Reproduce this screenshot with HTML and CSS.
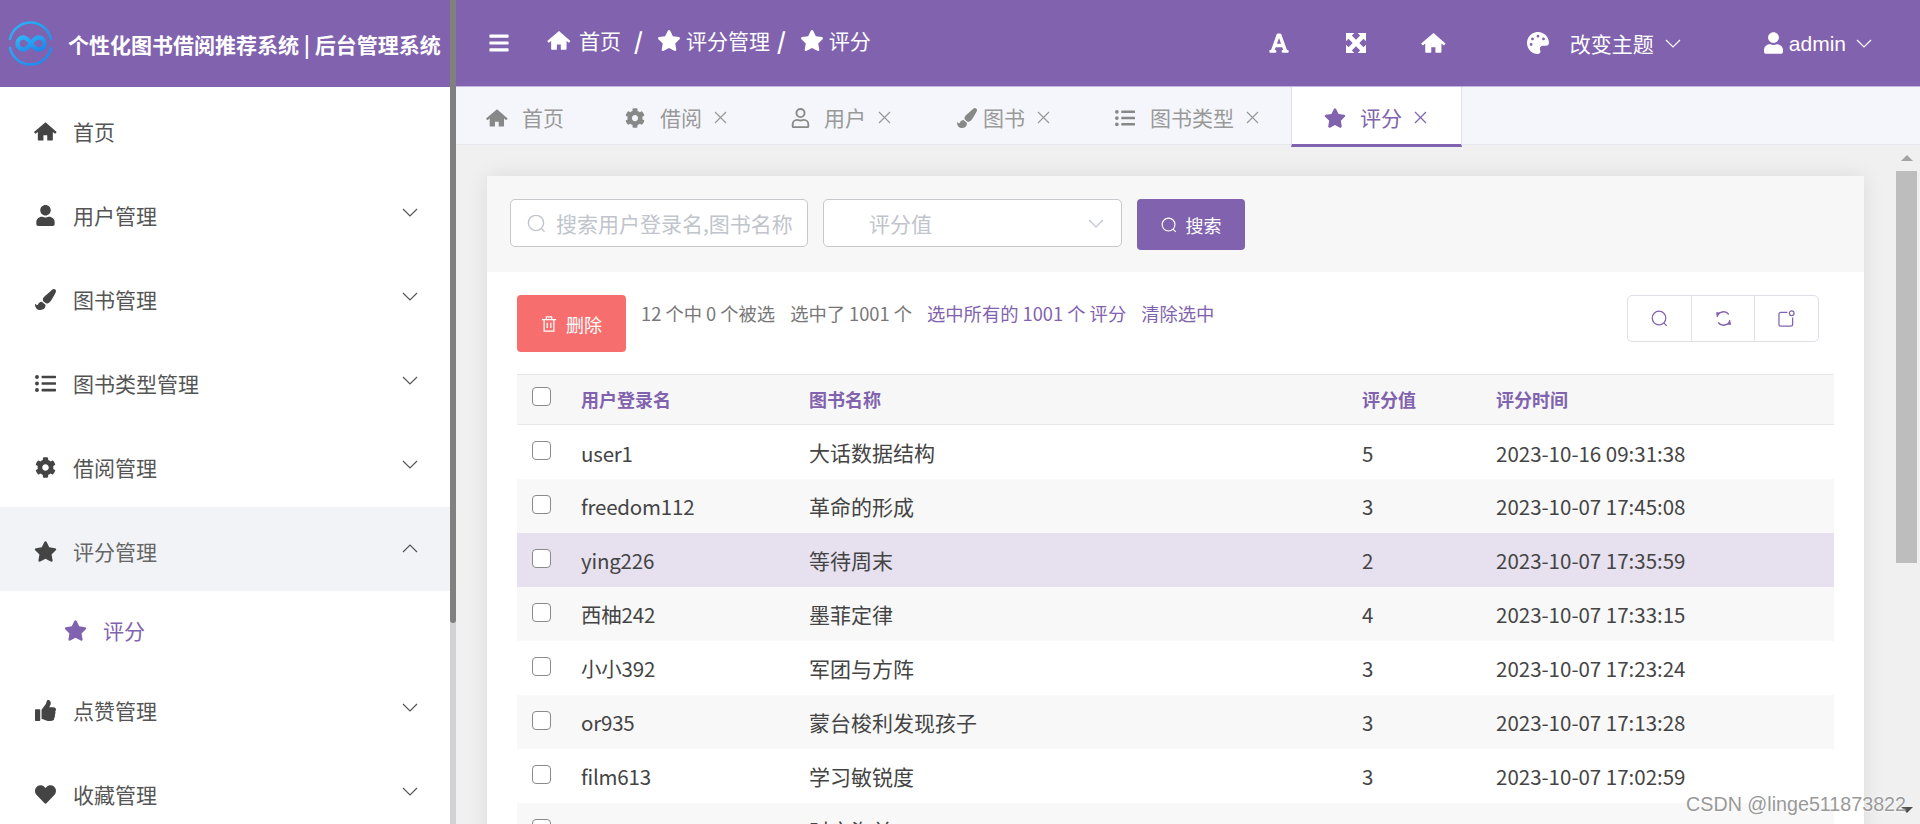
FILE: index.html
```html
<!DOCTYPE html>
<html lang="zh-CN">
<head>
    <meta charset="UTF-8">
    <meta name="viewport" content="width=device-width, initial-scale=1.0">
    <title>个性化图书借阅推荐系统</title>
    <link rel="stylesheet" href="styles.css">
</head>
<body>
    <!-- Icon sprite -->
    <svg class="sprite" xmlns="http://www.w3.org/2000/svg">
        <symbol id="i-star" viewBox="0 0 576 512"><path d="M259.3 17.8L194 150.2 47.9 171.5c-26.2 3.8-36.7 36.1-17.7 54.6l105.7 103-25 145.5c-4.5 26.3 23.2 46 46.4 33.7L288 439.6l130.7 68.7c23.2 12.2 50.9-7.4 46.4-33.7l-25-145.5 105.7-103c19-18.5 8.5-50.8-17.7-54.6L382 150.2 316.7 17.8c-11.7-23.6-45.6-23.9-57.4 0z"/></symbol>
        <symbol id="i-home" viewBox="0 0 576 512"><path d="M288 24L8 262a12 12 0 0 0-1 17l24 27a12 12 0 0 0 16 1l49-41v199a16 16 0 0 0 16 16h116a8 8 0 0 0 8-8V352h96v121a8 8 0 0 0 8 8h116a16 16 0 0 0 16-16V266l49 41a12 12 0 0 0 16-1l24-27a12 12 0 0 0-1-17z"/></symbol>
        <symbol id="i-user" viewBox="0 0 448 512"><path d="M224 256c70.7 0 128-57.3 128-128S294.7 0 224 0 96 57.3 96 128s57.3 128 128 128zm89.6 32h-16.7c-22.2 10.2-46.9 16-72.9 16s-50.6-5.8-72.9-16h-16.7C60.2 288 0 348.2 0 422.4V464c0 26.5 21.5 48 48 48h352c26.5 0 48-21.5 48-48v-41.6c0-74.2-60.2-134.4-134.4-134.4z"/></symbol>
        <symbol id="i-user-o" viewBox="0 0 448 512"><path fill="none" stroke="currentColor" stroke-width="48" d="M224 232a104 104 0 1 0 0-208 104 104 0 0 0 0 208zM48 488a24 24 0 0 1-24-24v-48c0-62 50-112 112-112 30 0 44 16 88 16s58-16 88-16c62 0 112 50 112 112v48a24 24 0 0 1-24 24z"/></symbol>
        <symbol id="i-cog" viewBox="0 0 512 512"><path d="M487.4 315.7l-42.6-24.6c4.3-23.2 4.3-47 0-70.2l42.6-24.6c4.9-2.8 7.1-8.6 5.5-14-11.1-35.6-30-67.8-54.7-94.6-3.8-4.1-10-5.1-14.8-2.3L380.8 110c-17.9-15.4-38.5-27.3-60.8-35.1V25.8c0-5.6-3.9-10.5-9.4-11.7-36.7-8.2-74.3-7.8-109.2 0-5.5 1.2-9.4 6.1-9.4 11.7V75c-22.2 7.9-42.8 19.8-60.8 35.1L88.7 85.5c-4.9-2.8-11-1.9-14.8 2.3-24.7 26.7-43.6 58.9-54.7 94.6-1.7 5.4.6 11.2 5.5 14L67.3 221c-4.3 23.2-4.3 47 0 70.2l-42.6 24.6c-4.9 2.8-7.1 8.6-5.5 14 11.1 35.6 30 67.8 54.7 94.6 3.8 4.1 10 5.1 14.8 2.3l42.6-24.6c17.9 15.4 38.5 27.3 60.8 35.1v49.2c0 5.6 3.9 10.5 9.4 11.7 36.7 8.2 74.3 7.8 109.2 0 5.5-1.2 9.4-6.1 9.4-11.7v-49.2c22.2-7.9 42.8-19.8 60.8-35.1l42.6 24.6c4.9 2.8 11 1.9 14.8-2.3 24.7-26.7 43.6-58.9 54.7-94.6 1.5-5.5-.7-11.3-5.6-14.1zM256 336c-44.1 0-80-35.9-80-80s35.9-80 80-80 80 35.9 80 80-35.9 80-80 80z"/></symbol>
        <symbol id="i-brush" viewBox="0 0 512 512"><path d="M167.02 309.34c-40.12 2.58-76.53 17.86-97.19 72.3-2.35 6.21-8 9.98-14.59 9.98-11.11 0-45.46-27.67-55.25-34.35C0 439.62 37.93 512 128 512c75.86 0 128-43.77 128-120.19 0-3.11-.65-6.08-.97-9.13l-88.01-73.34zM457.89 0c-15.16 0-29.37 6.71-40.21 16.45C213.27 199.05 192 203.34 192 257.09c0 13.7 3.25 26.76 8.73 38.7l63.82 53.18c7.21 1.8 14.64 3.03 22.39 3.03 62.11 0 98.11-45.47 211.16-256.46 7.38-14.35 13.9-29.85 13.9-45.99C512 20.64 486 0 457.89 0z"/></symbol>
        <symbol id="i-list" viewBox="0 0 512 512"><path d="M48 48a48 48 0 1 0 48 48 48 48 0 0 0-48-48zm0 160a48 48 0 1 0 48 48 48 48 0 0 0-48-48zm0 160a48 48 0 1 0 48 48 48 48 0 0 0-48-48zm448 16H176a16 16 0 0 0-16 16v32a16 16 0 0 0 16 16h320a16 16 0 0 0 16-16v-32a16 16 0 0 0-16-16zm0-320H176a16 16 0 0 0-16 16v32a16 16 0 0 0 16 16h320a16 16 0 0 0 16-16V80a16 16 0 0 0-16-16zm0 160H176a16 16 0 0 0-16 16v32a16 16 0 0 0 16 16h320a16 16 0 0 0 16-16v-32a16 16 0 0 0-16-16z"/></symbol>
        <symbol id="i-thumb" viewBox="0 0 512 512"><path d="M104 224H24c-13.255 0-24 10.745-24 24v240c0 13.255 10.745 24 24 24h80c13.255 0 24-10.745 24-24V248c0-13.255-10.745-24-24-24zM384 81.452c0 42.416-25.97 66.208-33.277 94.548h101.723c33.397 0 59.397 27.746 59.553 58.098.084 17.938-7.546 37.249-19.439 49.197l-.11.11c9.836 23.337 8.237 56.037-9.308 79.469 8.681 25.895-.069 57.704-16.382 74.757 4.298 17.598 2.244 32.575-6.148 44.632C440.202 511.587 389.616 512 346.839 512l-2.845-.001c-48.287-.017-87.806-17.598-119.56-31.725-15.957-7.099-36.821-15.887-52.651-16.178-6.54-.12-11.783-5.457-11.783-11.998v-213.77c0-3.2 1.282-6.271 3.558-8.521 39.614-39.144 56.648-80.587 89.117-113.111 14.804-14.832 20.188-37.236 25.393-58.902C282.515 39.293 291.817 0 312 0c24 0 72 8 72 81.452z"/></symbol>
        <symbol id="i-heart" viewBox="0 0 512 512"><path d="M462.3 62.6C407.5 15.9 326 24.3 275.7 76.2L256 96.5l-19.7-20.3C186.1 24.3 104.5 15.9 49.7 62.6c-62.8 53.6-66.1 149.8-9.9 207.9l193.5 199.8c12.5 12.9 32.8 12.9 45.3 0l193.5-199.8c56.3-58.1 53-154.3-9.8-207.9z"/></symbol>
        <symbol id="i-palette" viewBox="0 0 512 512"><path d="M204.3 5C104.9 24.4 24.8 104.3 5.2 203.4c-37 187 131.7 326.4 258.8 306.7 41.2-6.4 61.4-54.6 42.5-91.7-23.1-45.4 9.9-98.4 60.9-98.4h79.7c35.8 0 64.8-29.6 64.9-65.3C511.5 97.1 368.1-26.9 204.3 5zM96 320c-17.7 0-32-14.3-32-32s14.3-32 32-32 32 14.3 32 32-14.3 32-32 32zm32-128c-17.7 0-32-14.3-32-32s14.3-32 32-32 32 14.3 32 32-14.3 32-32 32zm128-64c-17.7 0-32-14.3-32-32s14.3-32 32-32 32 14.3 32 32-14.3 32-32 32zm128 64c-17.7 0-32-14.3-32-32s14.3-32 32-32 32 14.3 32 32-14.3 32-32 32z"/></symbol>
        <symbol id="i-font" viewBox="0 0 448 512"><path d="M432 416h-23.41L277.88 53.69A32 32 0 0 0 247.58 32h-47.16a32 32 0 0 0-30.3 21.69L39.41 416H16a16 16 0 0 0-16 16v32a16 16 0 0 0 16 16h128a16 16 0 0 0 16-16v-32a16 16 0 0 0-16-16h-19.58l23.3-64h152.56l23.3 64H304a16 16 0 0 0-16 16v32a16 16 0 0 0 16 16h128a16 16 0 0 0 16-16v-32a16 16 0 0 0-16-16zM176.85 272L224 142.51 271.15 272z"/></symbol>
        <symbol id="i-expand" viewBox="0 0 24 24"><path d="M0 0h10L7 3l5 5 5-5-3-3h10v10l-3-3-5 5 5 5 3-3v10H14l3-3-5-5-5 5 3 3H0V14l3 3 5-5-5-5-3 3z"/></symbol>
        <symbol id="i-bars" viewBox="0 0 448 512"><path d="M16 132h416c8.837 0 16-7.163 16-16V76c0-8.837-7.163-16-16-16H16C7.163 60 0 67.163 0 76v40c0 8.837 7.163 16 16 16zm0 160h416c8.837 0 16-7.163 16-16v-40c0-8.837-7.163-16-16-16H16c-8.837 0-16 7.163-16 16v40c0 8.837 7.163 16 16 16zm0 160h416c8.837 0 16-7.163 16-16v-40c0-8.837-7.163-16-16-16H16c-8.837 0-16 7.163-16 16v40c0 8.837 7.163 16 16 16z"/></symbol>
        <!-- line icons -->
        <symbol id="i-down" viewBox="0 0 16 9"><path fill="none" stroke="currentColor" stroke-width="1.2" d="M1 1l7 7 7-7"/></symbol>
        <symbol id="i-up" viewBox="0 0 16 9"><path fill="none" stroke="currentColor" stroke-width="1.2" d="M1 8l7-7 7 7"/></symbol>
        <symbol id="i-close" viewBox="0 0 13 13"><path fill="none" stroke="currentColor" stroke-width="1.2" d="M1 1l11 11M12 1L1 12"/></symbol>
        <symbol id="i-search" viewBox="0 0 18 18"><circle cx="8.5" cy="8.5" r="7.2" fill="none" stroke="currentColor" stroke-width="1.3"/><path fill="none" stroke="currentColor" stroke-width="1.3" d="M13.6 13.6l3 3.2"/></symbol>
        <symbol id="i-refresh" viewBox="0 0 16 16"><path fill="none" stroke="currentColor" stroke-width="1.3" d="M2 6.5A6.2 6.2 0 0 1 13 4.2M14 9.500A6.200 6.200 0 0 1 3 11.800"/><path d="M1 2l4 .4-3.600 3zM15 14l-4-.4 3.600-3z"/></symbol>
        <symbol id="i-notice" viewBox="0 0 18 18"><path fill="none" stroke="currentColor" stroke-width="1.300" d="M10 2.500H3a2 2 0 0 0-2 2V15a2 2 0 0 0 2 2h10.500a2 2 0 0 0 2-2V8"/><circle cx="14.500" cy="3.500" r="2.500" fill="none" stroke="currentColor" stroke-width="1.300"/></symbol>
        <symbol id="i-trash" viewBox="0 0 16 18"><path fill="none" stroke="currentColor" stroke-width="1.400" d="M0 4h16M5 4V1h6v3M2.500 4v13h11V4M6 7.500v6M10 7.500v6"/></symbol>
    </svg>

    <!-- Sidebar -->
    <aside class="side">
        <div class="brand">
            <svg class="brand-logo" viewBox="0 0 45 45">
                <defs>
                    <linearGradient id="logo-grad" x1="0" y1="0" x2="1" y2="1">
                        <stop offset="0" stop-color="#2fb4f8"/>
                        <stop offset="1" stop-color="#1a86ee"/>
                    </linearGradient>
                </defs>
                <path fill="none" stroke="url(#logo-grad)" stroke-width="2.400" d="M1.800 19A21 21 0 0 1 43.200 19M43.200 26A21 21 0 0 1 1.800 26"/>
                <path fill="none" stroke="url(#logo-grad)" stroke-width="4.400" d="M23 22.500c-2.500-3.500-4.500-6-7.500-6a6 6 0 0 0 0 12c3 0 5-2.500 7.500-6s4.500-6 7.500-6a6 6 0 0 1 0 12c-3 0-5-2.500-7.500-6z"/>
            </svg>
            <span>个性化图书借阅推荐系统 | 后台管理系统</span>
        </div>
        <nav class="menu">
            <a class="menu-item"><svg class="ico"><use href="#i-home"/></svg>首页</a>
            <a class="menu-item"><svg class="ico"><use href="#i-user"/></svg>用户管理<svg class="chev"><use href="#i-down"/></svg></a>
            <a class="menu-item"><svg class="ico"><use href="#i-brush"/></svg>图书管理<svg class="chev"><use href="#i-down"/></svg></a>
            <a class="menu-item"><svg class="ico"><use href="#i-list"/></svg>图书类型管理<svg class="chev"><use href="#i-down"/></svg></a>
            <a class="menu-item"><svg class="ico"><use href="#i-cog"/></svg>借阅管理<svg class="chev"><use href="#i-down"/></svg></a>
            <a class="menu-item open"><svg class="ico"><use href="#i-star"/></svg>评分管理<svg class="chev"><use href="#i-up"/></svg></a>
            <a class="menu-sub"><svg class="ico"><use href="#i-star"/></svg>评分</a>
            <a class="menu-item"><svg class="ico"><use href="#i-thumb"/></svg>点赞管理<svg class="chev"><use href="#i-down"/></svg></a>
            <a class="menu-item"><svg class="ico"><use href="#i-heart"/></svg>收藏管理<svg class="chev"><use href="#i-down"/></svg></a>
        </nav>
    </aside>
    <div class="side-track"><div class="side-thumb"></div></div>

    <div class="right">
        <!-- Top bar -->
        <header class="topbar">
            <svg class="ico-bars"><use href="#i-bars"/></svg>
            <div class="crumbs">
                <svg class="ico-crumb crumb-first"><use href="#i-home"/></svg><span class="crumb-home">首页</span>
                <b class="crumb-sep">/</b>
                <svg class="ico-crumb"><use href="#i-star"/></svg><span>评分管理</span>
                <b class="crumb-sep">/</b>
                <svg class="ico-crumb"><use href="#i-star"/></svg><span>评分</span>
            </div>
            <div class="tools">
                <span class="tool"><svg class="ico-tool"><use href="#i-font"/></svg></span>
                <span class="tool"><svg class="ico-tool"><use href="#i-expand"/></svg></span>
                <span class="tool"><svg class="ico-tool"><use href="#i-home"/></svg></span>
            </div>
            <div class="theme">
                <svg class="ico-tool"><use href="#i-palette"/></svg>
                <span>改变主题</span>
                <svg class="chev-top"><use href="#i-down"/></svg>
            </div>
            <div class="account">
                <svg class="ico-tool"><use href="#i-user"/></svg>
                <span>admin</span>
                <svg class="chev-top"><use href="#i-down"/></svg>
            </div>
        </header>

        <!-- Tabs -->
        <div class="tabs">
            <div class="tab tab-first"><svg class="ico"><use href="#i-home"/></svg>首页</div>
            <div class="tab"><svg class="ico"><use href="#i-cog"/></svg>借阅<svg class="tab-x"><use href="#i-close"/></svg></div>
            <div class="tab tab-user"><svg class="ico"><use href="#i-user-o"/></svg>用户<svg class="tab-x"><use href="#i-close"/></svg></div>
            <div class="tab tab-brush"><svg class="ico"><use href="#i-brush"/></svg>图书<svg class="tab-x"><use href="#i-close"/></svg></div>
            <div class="tab"><svg class="ico"><use href="#i-list"/></svg>图书类型<svg class="tab-x"><use href="#i-close"/></svg></div>
            <div class="tab active"><svg class="ico"><use href="#i-star"/></svg>评分<svg class="tab-x"><use href="#i-close"/></svg></div>
        </div>

        <div class="main">
            <div class="content">
                <section class="card">
                    <!-- Search form -->
                    <div class="search">
                        <label class="field field-text">
                            <svg class="ico-search"><use href="#i-search"/></svg>
                            <input type="text" placeholder="搜索用户登录名,图书名称">
                        </label>
                        <div class="field field-select">
                            <span>评分值</span>
                            <svg class="chev-select"><use href="#i-down"/></svg>
                        </div>
                        <button class="btn-search"><svg class="ico-btn"><use href="#i-search"/></svg>搜索</button>
                    </div>

                    <div class="panel">
                        <!-- Table toolbar -->
                        <div class="toolbar">
                            <button class="btn-del"><svg class="ico-btn"><use href="#i-trash"/></svg>删除</button>
                            <div class="selected">
                                <span>12 个中 0 个被选</span>
                                <span>选中了 1001 个</span>
                                <a>选中所有的 1001 个 评分</a>
                                <a>清除选中</a>
                            </div>
                            <div class="actions">
                                <span class="action"><svg><use href="#i-search"/></svg></span>
                                <span class="action"><svg><use href="#i-refresh"/></svg></span>
                                <span class="action"><svg><use href="#i-notice"/></svg></span>
                            </div>
                        </div>

                        <table class="grid">
                            <colgroup>
                                <col class="col-check">
                                <col class="col-user">
                                <col class="col-book">
                                <col class="col-score">
                                <col>
                            </colgroup>
                            <thead>
                                <tr>
                                    <th><input class="check" type="checkbox"></th>
                                    <th>用户登录名</th>
                                    <th>图书名称</th>
                                    <th>评分值</th>
                                    <th>评分时间</th>
                                </tr>
                            </thead>
                            <tbody>
                                <tr>
                                    <td><input class="check" type="checkbox"></td>
                                    <td class="cell-user">user1</td>
                                    <td class="cell-book">大话数据结构</td>
                                    <td>5</td>
                                    <td>2023-10-16 09:31:38</td>
                                </tr>
                                <tr>
                                    <td><input class="check" type="checkbox"></td>
                                    <td class="cell-user">freedom112</td>
                                    <td class="cell-book">革命的形成</td>
                                    <td>3</td>
                                    <td>2023-10-07 17:45:08</td>
                                </tr>
                                <tr class="hover">
                                    <td><input class="check" type="checkbox"></td>
                                    <td class="cell-user">ying226</td>
                                    <td class="cell-book">等待周末</td>
                                    <td>2</td>
                                    <td>2023-10-07 17:35:59</td>
                                </tr>
                                <tr>
                                    <td><input class="check" type="checkbox"></td>
                                    <td class="cell-user">西柚242</td>
                                    <td class="cell-book">墨菲定律</td>
                                    <td>4</td>
                                    <td>2023-10-07 17:33:15</td>
                                </tr>
                                <tr>
                                    <td><input class="check" type="checkbox"></td>
                                    <td class="cell-user">小小392</td>
                                    <td class="cell-book">军团与方阵</td>
                                    <td>3</td>
                                    <td>2023-10-07 17:23:24</td>
                                </tr>
                                <tr>
                                    <td><input class="check" type="checkbox"></td>
                                    <td class="cell-user">or935</td>
                                    <td class="cell-book">蒙台梭利发现孩子</td>
                                    <td>3</td>
                                    <td>2023-10-07 17:13:28</td>
                                </tr>
                                <tr>
                                    <td><input class="check" type="checkbox"></td>
                                    <td class="cell-user">film613</td>
                                    <td class="cell-book">学习敏锐度</td>
                                    <td>3</td>
                                    <td>2023-10-07 17:02:59</td>
                                </tr>
                                <tr>
                                    <td><input class="check" type="checkbox"></td>
                                    <td class="cell-user">star827</td>
                                    <td class="cell-book">时空海关</td>
                                    <td>4</td>
                                    <td>2023-10-07 16:52:41</td>
                                </tr>
                            </tbody>
                        </table>
                    </div>
                </section>
            </div>
            <div class="main-track">
                <i class="arrow-up"></i>
                <div class="main-thumb"></div>
                <i class="arrow-down"></i>
            </div>
        </div>
    </div>

    <div class="watermark">CSDN @linge511873822</div>
</body>
</html>
```

FILE: styles.css
```css
* {
    box-sizing: border-box;
}
body {
    margin: 0;
    height: 100vh;
    display: flex;
    overflow: hidden;
    font-family: "Noto Sans CJK SC", "Noto Sans", sans-serif;
    color: #444;
    background: #fff;
}
.sprite {
    display: none;
}
svg {
    fill: currentColor;
    flex: none;
}

/* Sidebar */
.side {
    width: 450px;
    flex: none;
    height: 100%;
    overflow: hidden;
}
.brand {
    height: 87px;
    background: #8162ae;
    color: #fff;
    display: flex;
    align-items: center;
    padding-left: 8px;
    gap: 15px;
    font-size: 21px;
    font-weight: 700;
    white-space: nowrap;
}
.brand-logo {
    width: 45px;
    height: 45px;
}
.menu-item,
.menu-sub {
    display: flex;
    align-items: center;
    font-size: 21px;
    line-height: 1;
    padding-top: 4px;
    color: #555;
}
.menu-item {
    height: 84px;
    padding-left: 34px;
}
.menu-item .ico,
.menu-sub .ico {
    width: 23px;
    height: 21px;
    margin-right: 16px;
    color: #444;
}
.menu-item.open {
    background: #f1f3f7;
    color: #666;
}
.chev {
    width: 16px;
    height: 9px;
    margin: 0 32px 6px auto;
    color: #555;
}
.menu-sub {
    height: 75px;
    padding-left: 64px;
    color: #8162ae;
}
.menu-sub .ico {
    color: #8162ae;
}
.side-track {
    width: 6px;
    flex: none;
    background: #d1d1d6;
}
.side-thumb {
    height: 623px;
    background: #808080;
    border-radius: 0 0 3px 3px;
}

.right {
    flex: 1;
    min-width: 0;
    display: flex;
    flex-direction: column;
}

/* Top bar */
.topbar {
    height: 87px;
    flex: none;
    display: flex;
    align-items: center;
    background: #8162ae;
    border-bottom: 1px solid #c3b6de;
    color: #fff;
    font-size: 21px;
    line-height: 1;
    padding: 0 48px 0 33px;
}
.ico-bars {
    width: 20px;
    height: 22px;
}
.crumbs {
    display: flex;
    align-items: center;
    margin-left: 38px;
    padding-bottom: 5px;
}
.ico-crumb {
    width: 24px;
    height: 21px;
    margin-right: 5px;
}
.crumb-first {
    margin-right: 8px;
}
.crumb-home {
    margin-right: 6px;
}
.crumb-sep {
    font-size: 23px;
    margin: 0 14px 0 7px;
}
.tools {
    display: flex;
    margin-left: auto;
}
.tool {
    width: 77px;
    display: flex;
    justify-content: center;
}
.ico-tool {
    height: 22px;
    width: 22px;
}
.tool:nth-child(3) .ico-tool {
    width: 25px;
}
.tool:nth-child(2) .ico-tool {
    height: 20px;
    width: 20px;
    margin-top: 1px;
}
.theme {
    display: flex;
    align-items: center;
    margin-left: 55px;
}
.theme span {
    margin: 0 11px 0 21px;
}
.chev-top {
    width: 16px;
    height: 9px;
}
.account {
    display: flex;
    align-items: center;
    margin-left: 83px;
}
.account .ico-tool {
    width: 19px;
}
.account span {
    font-family: "Liberation Sans", sans-serif;
    margin: 0 10px 0 6px;
}

/* Tabs */
.tabs {
    height: 58px;
    flex: none;
    display: flex;
    align-items: flex-start;
    background: #f4f6fb;
    border-bottom: 1px solid #e4e6ec;
    position: relative;
    z-index: 1;
}
.tab {
    height: 57px;
    display: flex;
    align-items: center;
    padding: 4px 32px 0;
    font-size: 21px;
    line-height: 1;
    color: #999;
}
.tab .ico {
    width: 22px;
    height: 20px;
    margin-right: 14px;
    color: #888;
}
.tab-first {
    padding: 4px 28px 0 30px;
}
.tab-user {
    padding-right: 33px;
}
.tab-user .ico {
    width: 19px;
}
.tab-brush .ico {
    width: 24px;
    margin-left: -1px;
    margin-right: 4px;
}
.tab-x {
    width: 13px;
    height: 13px;
    margin-left: 12px;
    color: #999;
}
.tab.active {
    height: 60px;
    padding: 4px 34px 0 32px;
    background: #fff;
    color: #8162ae;
    border-left: 1px solid #dfe1ea;
    border-right: 1px solid #dfe1ea;
    border-bottom: 3px solid #8162ae;
}
.tab.active .ico,
.tab.active .tab-x {
    color: #8162ae;
}

/* Main area */
.main {
    flex: 1;
    min-height: 0;
    display: flex;
    background: #f0f0f0;
}
.content {
    flex: 1;
    min-width: 0;
    padding: 31px 32px 0 31px;
    overflow: hidden;
}
.card {
    background: #fff;
    box-shadow: 0 0 20px rgba(0, 0, 0, .09);
}
.main-track {
    width: 24px;
    flex: none;
    display: flex;
    flex-direction: column;
    align-items: center;
    padding: 10px 3px 11px 0;
}
.arrow-up {
    border: 6px solid transparent;
    border-top: 0;
    border-bottom: 6px solid #a3a3a3;
    margin-bottom: 10px;
}
.main-thumb {
    width: 21px;
    height: 392px;
    background: #bdbdbd;
}
.arrow-down {
    margin-top: auto;
    border: 6px solid transparent;
    border-bottom: 0;
    border-top: 6px solid #505050;
}

/* Search form */
.search {
    height: 96px;
    background: #f7f7f7;
    display: flex;
    align-items: flex-start;
    gap: 15px;
    padding: 23px 0 0 23px;
}
.field {
    height: 48px;
    background: #fff;
    border: 1px solid #c8c8cc;
    border-radius: 5px;
    display: flex;
    align-items: center;
    font-size: 21px;
    color: #c0c4cc;
}
.field-text {
    width: 298px;
    padding-left: 16px;
}
.ico-search {
    width: 19px;
    height: 19px;
    margin-right: 10px;
}
.field-text input {
    width: 245px;
    border: 0;
    outline: 0;
    padding: 0;
    background: none;
    font: inherit;
}
.field-text input::placeholder {
    color: #c0c4cc;
}
.field-select {
    width: 299px;
    padding-left: 45px;
}
.chev-select {
    width: 16px;
    height: 9px;
    margin-left: auto;
    margin-right: 17px;
}
.btn-search,
.btn-del {
    border: 0;
    border-radius: 4px;
    color: #fff;
    font: inherit;
    font-size: 18px;
    line-height: 1;
    display: flex;
    align-items: center;
    justify-content: center;
    width: 108px;
    padding: 0;
}
.btn-search {
    height: 51px;
    background: #8162ae;
}
.ico-btn {
    width: 16px;
    height: 16px;
    margin-right: 9px;
}

/* Table toolbar */
.panel {
    padding: 23px 30px 0;
}
.toolbar {
    height: 79px;
    display: flex;
    align-items: flex-start;
    font-size: 18.3px;
    color: #777;
}
.btn-del {
    height: 57px;
    width: 109px;
    background: #f76e6e;
}
.selected {
    display: flex;
    gap: 15px;
    margin-left: 15px;
    line-height: 36px;
}
.selected a {
    color: #8162ae;
}
.actions {
    display: flex;
    margin: 0 15px 0 auto;
    width: 192px;
    height: 47px;
    border: 1px solid #e0dee9;
    border-radius: 5px;
    color: #8162ae;
}
.action {
    flex: 1;
    display: flex;
    align-items: center;
    justify-content: center;
    border-left: 1px solid #e0dee9;
}
.action:first-child {
    border-left: 0;
}
.action svg {
    width: 17px;
    height: 17px;
}

/* Table */
.grid {
    width: 100%;
    table-layout: fixed;
    border-collapse: collapse;
    font-size: 20.5px;
    line-height: 1;
    color: #444;
}
.col-check {
    width: 64px;
}
.col-user {
    width: 228px;
}
.col-book {
    width: 553px;
}
.col-score {
    width: 134px;
}
.grid th,
.grid td {
    padding: 0;
    text-align: left;
    white-space: nowrap;
}
.grid th {
    height: 50px;
    background: #f7f7f7;
    border-top: 1px solid #e8e8e8;
    border-bottom: 1px solid #e8e8e8;
    padding-bottom: 2px;
    font-size: 18px;
    font-weight: 700;
    color: #8162ae;
}
.grid td {
    height: 54px;
    padding-top: 2px;
}
.grid .cell-user {
    letter-spacing: -.2px;
}
.grid .cell-book {
    font-size: 21px;
}
.grid tbody tr:nth-child(even) {
    background: #f8f8f8;
}
.grid tbody tr.hover {
    background: #e6e0ef;
}
.check {
    appearance: none;
    display: block;
    width: 19px;
    height: 19px;
    margin: 0 0 5px 15px;
    border: 1.5px solid #8a8a8a;
    border-radius: 4px;
    background: #fff;
}

.watermark {
    position: absolute;
    right: 14px;
    bottom: 9px;
    font-family: "Liberation Sans", sans-serif;
    font-size: 19.7px;
    line-height: 1;
    color: #999;
    text-shadow: 0 0 2px #fff, 0 0 2px #fff;
}
```
